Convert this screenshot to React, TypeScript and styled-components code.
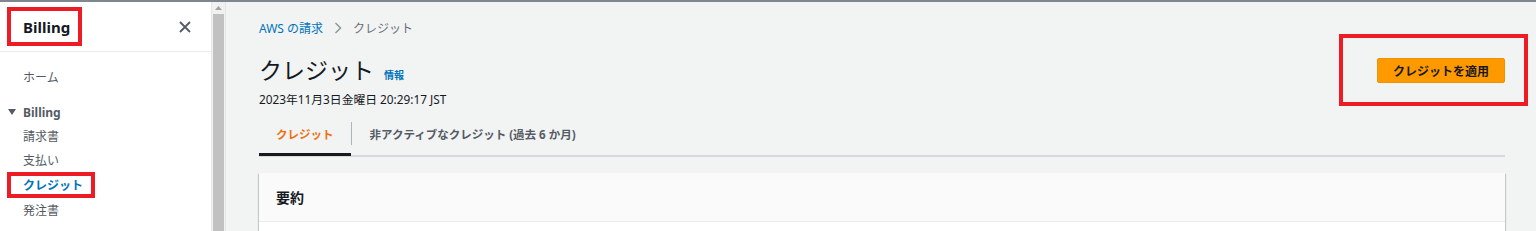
import React from 'react';
import styled, { createGlobalStyle } from 'styled-components';

const GlobalStyle = createGlobalStyle`
  html, body {
    margin: 0;
    padding: 0;
    background: #f2f3f3;
  }
  body {
    font-family: "Noto Sans", "Noto Sans CJK JP", sans-serif;
    color: #16191f;
    -webkit-font-smoothing: antialiased;
  }
`;

const Page = styled.div`
  display: flex;
  height: 231px;
  box-sizing: border-box;
  border-top: 2px solid #80868d;
  overflow: hidden;
`;

// ---- side navigation ----

const Sidebar = styled.nav`
  width: 212px;
  flex-shrink: 0;
  background: #fff;
  border-right: 1px solid #e6e6e6;
  box-sizing: border-box;
`;

const SideHeader = styled.div`
  display: flex;
  align-items: center;
  justify-content: space-between;
  height: 50px;
  padding: 0 19px 0 7px;
  border-bottom: 1px solid #eaeded;
  box-sizing: border-box;
`;

// red annotation box around the title
const SideTitle = styled.div`
  display: flex;
  align-items: center;
  height: 39px;
  box-sizing: border-box;
  padding: 0 8px 0 12px;
  border: 4px solid #ed1c24;
  font-size: 15px;
  font-weight: 700;
  color: #16191f;
`;

const CloseButton = styled.button`
  display: flex;
  align-items: center;
  justify-content: center;
  width: 14px;
  height: 14px;
  padding: 0;
  border: none;
  background: none;
  color: #545b64;
`;

const NavList = styled.div`
  display: flex;
  flex-direction: column;
  padding-top: 13px;
`;

const NavItem = styled.div<{ $active?: boolean; $highlight?: boolean }>`
  display: flex;
  align-items: center;
  height: ${p => (p.$highlight ? '26px' : '24px')};
  box-sizing: border-box;
  padding-left: 23px;
  font-size: 12px;
  color: ${p => (p.$active ? '#0073bb' : '#545b64')};
  font-weight: ${p => (p.$active ? 700 : 400)};
  ${p =>
    p.$highlight &&
    `
    width: fit-content;
    margin-left: 7px;
    padding: 0 8px 0 12px;
    border: 4px solid #ed1c24;
  `}
`;

const SectionLabel = styled.div`
  display: flex;
  align-items: center;
  gap: 7px;
  height: 24px;
  margin-top: 11px;
  padding-left: 8px;
  font-size: 12px;
  font-weight: 700;
  color: #545b64;
`;

const ScrollTrack = styled.div`
  width: 13px;
  flex-shrink: 0;
  display: flex;
  flex-direction: column;
  align-items: center;
  background: #f1f1f1;
  border-right: 1px solid #e4e6e6;
`;

const ScrollArrow = styled.div`
  height: 12px;
  display: flex;
  align-items: center;
  justify-content: center;
`;

const ScrollThumb = styled.div`
  width: 11px;
  flex: 1;
  background: #c1c1c1;
`;

// ---- main content ----

const Main = styled.main`
  flex: 1;
  min-width: 0;
  padding: 16px 31px 0 33px;
  background: #f2f3f3;
`;

const Breadcrumbs = styled.div`
  display: flex;
  align-items: center;
  gap: 11px;
  height: 20px;
  font-size: 12px;
`;

const Crumb = styled.span<{ $link?: boolean }>`
  color: ${p => (p.$link ? '#0073bb' : '#687078')};
`;

const HeaderRow = styled.div`
  display: flex;
  justify-content: space-between;
  align-items: flex-start;
  margin-top: 16px;
`;

const TitleBlock = styled.div`
  display: flex;
  flex-direction: column;
`;

const TitleLine = styled.div`
  display: flex;
  align-items: baseline;
  gap: 10px;
  height: 32px;
`;

const Title = styled.h1`
  margin: 0;
  font-size: 23px;
  font-weight: 400;
  line-height: 32px;
  color: #16191f;
`;

const InfoLink = styled.a`
  font-size: 10px;
  font-weight: 700;
  color: #0073bb;
  text-decoration: none;
`;

const DateLine = styled.div`
  margin-top: 4px;
  font-size: 11.8px;
  line-height: 18px;
  color: #16191f;
`;

// red annotation box around the action
const ActionFrame = styled.div`
  margin: -20px -23px 0 0;
  padding: 20px 19px 19px 34px;
  border: 4px solid #ed1c24;
`;

const PrimaryButton = styled.button`
  width: 128px;
  height: 25px;
  padding: 0;
  border: 1px solid #ec9400;
  border-radius: 2px;
  background: #ff9900;
  color: #16191f;
  font-family: inherit;
  font-size: 12px;
  font-weight: 700;
`;

const TabList = styled.div`
  display: flex;
  align-items: center;
  margin-top: 4px;
  border-bottom: 2px solid #d5dbdb;
`;

const Tab = styled.div<{ $active?: boolean }>`
  display: flex;
  align-items: center;
  height: 43px;
  padding: 0 17px 0 ${p => (p.$active ? '17px' : '18px')};
  font-size: 11.5px;
  font-weight: 700;
  color: ${p => (p.$active ? '#ec7211' : '#545b64')};
  box-shadow: ${p => (p.$active ? 'inset 0 -3px 0 #16191f' : 'none')};
  margin-bottom: ${p => (p.$active ? '-1px' : '0')};
`;

const TabDivider = styled.span`
  width: 1px;
  height: 23px;
  background: #aab7b8;
`;

const Card = styled.section`
  margin-top: 16px;
  background: #fff;
  box-shadow: 0 1px 1px 0 rgba(0, 28, 36, 0.3), 1px 1px 1px 0 rgba(0, 28, 36, 0.15),
    -1px 1px 1px 0 rgba(0, 28, 36, 0.15);
`;

const CardHeader = styled.div`
  display: flex;
  align-items: center;
  height: 48px;
  padding-left: 17px;
  background: #fafafa;
  border-bottom: 1px solid #eaeded;
  font-size: 14px;
  font-weight: 700;
  color: #16191f;
`;

const CardBody = styled.div`
  height: 40px;
`;

const App: React.FC = () => {
  return (
    <>
      <GlobalStyle />
      <Page>
        <Sidebar>
          <SideHeader>
            <SideTitle>Billing</SideTitle>
            <CloseButton aria-label="close">
              <svg width="12" height="12" viewBox="0 0 12 12">
                <path d="M1 1L11 11M11 1L1 11" stroke="currentColor" strokeWidth="1.8" fill="none" />
              </svg>
            </CloseButton>
          </SideHeader>
          <NavList>
            <NavItem>ホーム</NavItem>
            <SectionLabel>
              <svg width="8" height="6" viewBox="0 0 8 6">
                <path d="M0 0H8L4 6Z" fill="#545b64" />
              </svg>
              Billing
            </SectionLabel>
            <NavItem>請求書</NavItem>
            <NavItem>支払い</NavItem>
            <NavItem $active $highlight>クレジット</NavItem>
            <NavItem>発注書</NavItem>
          </NavList>
        </Sidebar>
        <ScrollTrack>
          <ScrollArrow>
            <svg width="7" height="4" viewBox="0 0 7 4">
              <path d="M0 4L3.5 0L7 4Z" fill="#a3a3a3" />
            </svg>
          </ScrollArrow>
          <ScrollThumb />
        </ScrollTrack>
        <Main>
          <Breadcrumbs>
            <Crumb $link>AWS の請求</Crumb>
            <svg width="8" height="12" viewBox="0 0 8 12">
              <path d="M1.5 1L6.5 6L1.5 11" stroke="#879596" strokeWidth="1.4" fill="none" />
            </svg>
            <Crumb>クレジット</Crumb>
          </Breadcrumbs>
          <HeaderRow>
            <TitleBlock>
              <TitleLine>
                <Title>クレジット</Title>
                <InfoLink href="#">情報</InfoLink>
              </TitleLine>
              <DateLine>2023年11月3日金曜日 20:29:17 JST</DateLine>
            </TitleBlock>
            <ActionFrame>
              <PrimaryButton>クレジットを適用</PrimaryButton>
            </ActionFrame>
          </HeaderRow>
          <TabList>
            <Tab $active>クレジット</Tab>
            <TabDivider />
            <Tab>非アクティブなクレジット (過去 6 か月)</Tab>
          </TabList>
          <Card>
            <CardHeader>要約</CardHeader>
            <CardBody />
          </Card>
        </Main>
      </Page>
    </>
  );
};

export default App;
